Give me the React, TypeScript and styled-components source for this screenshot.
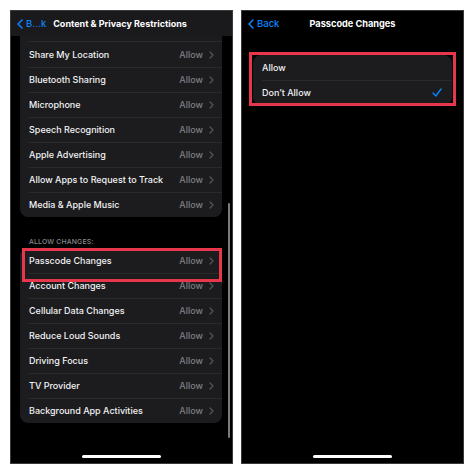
import React from 'react'
import styled, { createGlobalStyle } from 'styled-components'

const GlobalStyle = createGlobalStyle`
  html, body {
    margin: 0;
    padding: 0;
    background: #ffffff;
  }
  body {
    font-family: Inter, "Liberation Sans", Arial, sans-serif;
    -webkit-font-smoothing: antialiased;
  }
`

const Page = styled.div`
  width: 474px;
  height: 474px;
  box-sizing: border-box;
  padding: 11px 0 0 11px;
  display: flex;
  gap: 10px;
  background: #ffffff;
`

const Phone = styled.div`
  position: relative;
  width: 221px;
  height: 452px;
  background: #000000;
  display: flex;
  flex-direction: column;
  overflow: hidden;
  box-shadow: 0 0 0 1px #3a3a3c;
`

const NavBar = styled.div<{ $bg: string }>`
  height: 25px;
  flex: 0 0 25px;
  background: ${(p) => p.$bg};
  display: flex;
  align-items: center;
  position: relative;
  padding-left: 6px;
  gap: 6px;
  line-height: 12px;
`

const BackLink = styled.div`
  display: flex;
  align-items: center;
  gap: 3px;
  color: #0a84ff;
  font-size: 9.5px;
  font-weight: 500;
`

const NavTitle = styled.div<{ $centered?: boolean }>`
  color: #ffffff;
  font-size: ${(p) => (p.$centered ? 9.2 : 9)}px;
  font-weight: 700;
  white-space: nowrap;
  ${(p) =>
    p.$centered
      ? `
    position: absolute;
    left: 0;
    right: 0;
    text-align: center;
  `
      : 'margin-left: 1px;'}
`

const Content = styled.div<{ $pad?: string }>`
  flex: 1;
  display: flex;
  flex-direction: column;
  overflow: hidden;
  padding: ${(p) => p.$pad ?? '0 10px 0 9px'};
`

const Group = styled.div<{ $scrolled?: boolean }>`
  background: #1c1c1e;
  border-radius: ${(p) => (p.$scrolled ? '0 0 8px 8px' : '8px')};
  position: relative;
`

/* the bottom of the row above, scrolled under the nav bar */
const ScrolledEdge = styled.div`
  height: 5px;
  border-bottom: 1px solid #2a2a2d;
  margin-left: 9px;
`

const Row = styled.div`
  height: 25px;
  display: flex;
  align-items: center;
  padding-left: 9px;
  position: relative;

  & + &::before {
    content: '';
    position: absolute;
    top: 0;
    left: 9px;
    right: 0;
    height: 1px;
    background: #2a2a2d;
  }
`

const Label = styled.span`
  flex: 1;
  color: #f2f2f4;
  font-size: 9px;
  font-weight: 500;
  white-space: nowrap;
`

const Value = styled.span`
  color: #7e7e83;
  font-size: 9px;
  font-weight: 500;
  margin-right: 6px;
`

const Chevron = styled.svg`
  width: 5px;
  height: 8px;
  margin-right: 8px;
`

const SectionHeader = styled.div`
  color: #8a8a8e;
  font-size: 6.8px;
  font-weight: 500;
  letter-spacing: 0.2px;
  padding: 20px 0 2px 9px;
  text-transform: uppercase;
`

const Highlight = styled.div`
  position: absolute;
  border: 3.5px solid #e8364c;
  pointer-events: none;
`

const ScrollBar = styled.div`
  position: absolute;
  right: 2px;
  top: 192px;
  width: 2px;
  height: 235px;
  border-radius: 1px;
  background: #7c7c80;
`

const HomeBar = styled.div`
  position: absolute;
  left: 50%;
  bottom: 5px;
  width: 79px;
  height: 3px;
  margin-left: -40px;
  border-radius: 2px;
  background: #ffffff;
`

const Check = styled.svg`
  width: 10px;
  height: 9px;
  margin-right: 10px;
`

const BackChevron = () => (
  <svg width="6" height="10" viewBox="0 0 6 10">
    <path d="M5 1 L1 5 L5 9" fill="none" stroke="#0a84ff" strokeWidth="1.6" strokeLinecap="round" strokeLinejoin="round" />
  </svg>
)

const Disclosure = () => (
  <Chevron viewBox="0 0 5 8">
    <path d="M1 1 L4 4 L1 7" fill="none" stroke="#56565a" strokeWidth="1.2" strokeLinecap="round" strokeLinejoin="round" />
  </Chevron>
)

const SettingRow = ({ label }: { label: string }) => (
  <Row>
    <Label>{label}</Label>
    <Value>Allow</Value>
    <Disclosure />
  </Row>
)

const topItems = [
  'Share My Location',
  'Bluetooth Sharing',
  'Microphone',
  'Speech Recognition',
  'Apple Advertising',
  'Allow Apps to Request to Track',
  'Media & Apple Music',
]

const changeItems = [
  'Passcode Changes',
  'Account Changes',
  'Cellular Data Changes',
  'Reduce Loud Sounds',
  'Driving Focus',
  'TV Provider',
  'Background App Activities',
]

const RestrictionsScreen = () => (
  <Phone>
    <NavBar $bg="#1a1a1c">
      <BackLink>
        <BackChevron />
        <span>B…k</span>
      </BackLink>
      <NavTitle>Content &amp; Privacy Restrictions</NavTitle>
    </NavBar>
    <Content>
      <Group $scrolled>
        <ScrolledEdge />
        {topItems.map((item) => (
          <SettingRow key={item} label={item} />
        ))}
      </Group>
      <SectionHeader>Allow Changes:</SectionHeader>
      <Group>
        {changeItems.map((item) => (
          <SettingRow key={item} label={item} />
        ))}
        <Highlight style={{ left: 2, top: -0.5, right: 0, height: 28 }} />
      </Group>
    </Content>
    <ScrollBar />
    <HomeBar />
  </Phone>
)

const PasscodeScreen = () => (
  <Phone>
    <NavBar $bg="#000000">
      <BackLink>
        <BackChevron />
        <span>Back</span>
      </BackLink>
      <NavTitle $centered>Passcode Changes</NavTitle>
    </NavBar>
    <Content $pad="19px 11px 0 11px">
      <Group>
        <Row>
          <Label>Allow</Label>
        </Row>
        <Row>
          <Label>Don’t Allow</Label>
          <Check viewBox="0 0 10 9">
            <path d="M1 5 L3.8 8 L9 1" fill="none" stroke="#0a84ff" strokeWidth="1.4" strokeLinecap="round" strokeLinejoin="round" />
          </Check>
        </Row>
        <Highlight style={{ left: -4, top: -3, right: -4, bottom: -1 }} />
      </Group>
    </Content>
    <HomeBar />
  </Phone>
)

export default function App() {
  return (
    <>
      <GlobalStyle />
      <Page>
        <RestrictionsScreen />
        <PasscodeScreen />
      </Page>
    </>
  )
}
